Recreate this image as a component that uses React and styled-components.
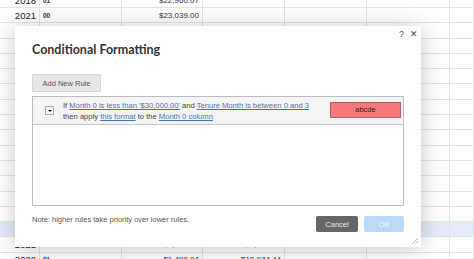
import React from "react";
import styled, { createGlobalStyle } from "styled-components";

const Global = createGlobalStyle`
  html, body { margin: 0; padding: 0; background: #fff; }
  body { width: 474px; height: 259px; overflow: hidden; font-family: "Liberation Sans", Arial, sans-serif; }
`;

const Page = styled.div({
  position: "relative",
  width: "474px",
  height: "259px",
  overflow: "hidden",
});

// spreadsheet behind the dialog
const Sheet = styled.div({
  display: "flex",
  flexDirection: "column",
  marginTop: "-7px",
});

const Row = styled.div((p) => ({
  display: "grid",
  gridTemplateColumns: "40px 82px 81px 82px 82px 83px 1fr",
  height: p.$h || "15.3px",
  background: p.$selected ? "#e3ecf8" : "transparent",
  borderBottom: "1px solid #e4e4e4",
  boxSizing: "border-box",
}));

const Cell = styled.div((p) => ({
  borderRight: "1px solid #e4e4e4",
  display: "flex",
  alignItems: "center",
  justifyContent: p.$right || p.$year ? "flex-end" : "flex-start",
  padding: "0 3px",
  fontSize: p.$year ? "9.5px" : p.$small ? "6.5px" : "8px",
  fontWeight: p.$small ? "bold" : "normal",
  color: p.$year ? "#222" : "#333",
  overflow: "hidden",
  whiteSpace: "nowrap",
  boxSizing: "border-box",
}));

const Dialog = styled.div({
  position: "absolute",
  left: "15px",
  top: "26px",
  width: "406px",
  height: "221px",
  boxSizing: "border-box",
  padding: "0 17px",
  background: "#fff",
  boxShadow: "0 2px 22px rgba(0,0,0,0.22)",
  display: "flex",
  flexDirection: "column",
});

const TopBar = styled.div({
  height: "16px",
  display: "flex",
  justifyContent: "flex-end",
  alignItems: "center",
  gap: "6px",
  marginRight: "-14px",
  fontSize: "9px",
  color: "#444",
});

const Title = styled.h2({
  margin: 0,
  height: "16px",
  lineHeight: "16px",
  fontFamily: "Lato, 'Open Sans', sans-serif",
  fontWeight: 700,
  fontSize: "12.5px",
  color: "#333",
});

const AddButton = styled.button({
  marginTop: "16px",
  alignSelf: "flex-start",
  width: "69px",
  height: "18px",
  padding: 0,
  background: "#e6e6e6",
  border: "1px solid #d6d6d6",
  borderRadius: "1px",
  fontFamily: "'Liberation Sans', Arial, sans-serif",
  fontSize: "7.5px",
  color: "#555",
});

const RulesBox = styled.div({
  marginTop: "4px",
  height: "110px",
  border: "1px solid #bdbdbd",
  boxSizing: "border-box",
  display: "flex",
  flexDirection: "column",
});

const RuleRow = styled.div({
  height: "28px",
  boxSizing: "border-box",
  background: "#f4f4f4",
  borderBottom: "1px solid #c8c8c8",
  display: "flex",
  alignItems: "center",
  padding: "0 2px 0 12px",
});

const Toggle = styled.span({
  width: "7px",
  height: "7px",
  border: "1px solid #aaa",
  background: "#f8f8f8",
  display: "flex",
  alignItems: "center",
  justifyContent: "center",
  marginRight: "9px",
  "&::after": {
    content: '""',
    width: 0,
    height: 0,
    borderLeft: "2px solid transparent",
    borderRight: "2px solid transparent",
    borderTop: "2.5px solid #111",
  },
});

const RuleText = styled.div({
  flex: 1,
  fontSize: "7.6px",
  lineHeight: "11px",
  color: "#444",
  whiteSpace: "nowrap",
});

const Link = styled.a({
  color: "#3a78b8",
  textDecoration: "underline",
});

const Swatch = styled.div({
  width: "71px",
  height: "16px",
  boxSizing: "border-box",
  background: "#f47a7a",
  border: "1px solid #b86060",
  display: "flex",
  alignItems: "center",
  justifyContent: "center",
  fontSize: "7.5px",
  color: "#3a1a1a",
  marginTop: "-2px",
});

const Footer = styled.div({
  marginTop: "10px",
  height: "16px",
  display: "flex",
  alignItems: "center",
  gap: "6px",
});

const Note = styled.div({
  flex: 1,
  fontSize: "7.5px",
  color: "#555",
  marginTop: "-9px",
});

const Btn = styled.button((p) => ({
  width: p.$w,
  height: "16px",
  padding: 0,
  border: "none",
  borderRadius: "2px",
  background: p.$bg,
  color: p.$fg,
  fontFamily: "'Liberation Sans', Arial, sans-serif",
  fontSize: "7.5px",
}));

const Grip = styled.svg({
  position: "absolute",
  right: "3px",
  bottom: "3px",
});

const rows = [
  ["2018", "01", "", "$22,960.07"],
  ["2021", "00", "", "$23,039.00"],
  [], [], [], [], [], [], [], [], [], [], [], [], [],
  ["sel"],
  ["2021", "", "", "$1,332.00", "$9,484.40"],
  ["2022", "01", "", "$1,490.04", "$10,974.44"],
];

export default function App() {
  return (
    <Page>
      <Global />
      <Sheet>
        {rows.map((r, i) => (
          <Row key={i} $selected={r[0] === "sel"} $h={i === 0 ? "15px" : undefined}>
            <Cell $year>{r[0] !== "sel" ? r[0] : ""}</Cell>
            <Cell $small>{r[1]}</Cell>
            <Cell $right>{r[3]}</Cell>
            <Cell $right>{r[4]}</Cell>
            <Cell />
            <Cell />
            <Cell />
          </Row>
        ))}
      </Sheet>
      <Dialog>
        <TopBar>
          <span>?</span>
          <span>✕</span>
        </TopBar>
        <Title>Conditional Formatting</Title>
        <AddButton>Add New Rule</AddButton>
        <RulesBox>
          <RuleRow>
            <Toggle />
            <RuleText>
              If <Link>Month 0 is less than '$30,000.00'</Link> and{" "}
              <Link>Tenure Month is between 0 and 3</Link>
              <br />
              then apply <Link>this format</Link> to the <Link>Month 0 column</Link>
            </RuleText>
            <Swatch>abcde</Swatch>
          </RuleRow>
        </RulesBox>
        <Footer>
          <Note>Note: higher rules take priority over lower rules.</Note>
          <Btn $w="42px" $bg="#666" $fg="#e6e6e6">Cancel</Btn>
          <Btn $w="40px" $bg="#b9d9f7" $fg="#f4f9ff">OK</Btn>
        </Footer>
        <Grip width="6" height="6" viewBox="0 0 6 6">
          <path d="M6 0L0 6M6 3L3 6" stroke="#aaa" strokeWidth="0.8" />
        </Grip>
      </Dialog>
    </Page>
  );
}
